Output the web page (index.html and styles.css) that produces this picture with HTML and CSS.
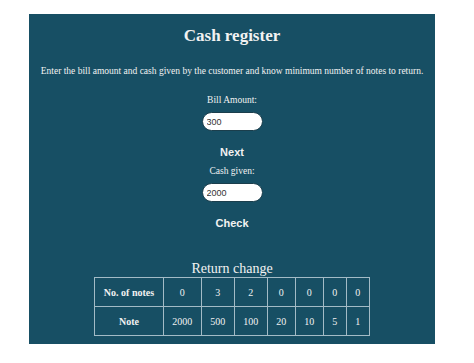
FILE: index.html
```html
<!doctype html>
<html>
  <head>
    <meta charset="utf-8">
    <title>Cash register</title>
    <link rel="stylesheet" href="styles.css">
  </head>
  <body>
    <div class="container">
      <h1 class="title">Cash register</h1>
      <p class="intro">Enter the bill amount and cash given by the customer and know minimum number of notes to return.</p>

      <label class="field-label" for="bill-amount">Bill Amount:</label>
      <input class="amount" id="bill-amount" type="number" value="300">
      <button class="btn">Next</button>

      <label class="field-label" for="cash-given">Cash given:</label>
      <input class="amount" id="cash-given" type="number" value="2000">
      <button class="btn">Check</button>

      <table class="change-table">
        <caption>Return change</caption>
        <tr>
          <th>No. of notes</th>
          <td>0</td><td>3</td><td>2</td><td>0</td><td>0</td><td>0</td><td>0</td>
        </tr>
        <tr>
          <th>Note</th>
          <td>2000</td><td>500</td><td>100</td><td>20</td><td>10</td><td>5</td><td>1</td>
        </tr>
      </table>
    </div>
  </body>
</html>
```

FILE: styles.css
```css
body {
  margin: 0;
  padding: 14px 39px 21px 29px;
  background: #ffffff;
  font-family: "Liberation Serif", "Times New Roman", serif;
}

.container {
  background: #174f64;
  color: #f2f2f2;
  display: flex;
  flex-direction: column;
  align-items: center;
  padding: 11px 0 8px 0;
}

.title {
  font-size: 17px;
  font-weight: bold;
  margin: 0;
  line-height: 22px;
}

.intro {
  font-size: 9.5px;
  margin: 18px 0 0 0;
  line-height: 12px;
}

.field-label {
  display: block;
  font-size: 9.5px;
  line-height: 11px;
  margin-top: 18px;
}

.amount {
  display: block;
  width: 61px;
  height: 19px;
  margin-top: 6px;
  box-sizing: border-box;
  border: 1px solid #1b3e4c;
  border-radius: 10px;
  background: #ffffff;
  font-family: "Liberation Sans", Arial, sans-serif;
  font-size: 9px;
  line-height: 17px;
  padding: 0 4px;
  color: #333;
  -moz-appearance: textfield;
}

.amount::-webkit-inner-spin-button,
.amount::-webkit-outer-spin-button {
  -webkit-appearance: none;
  margin: 0;
}

.btn {
  display: block;
  background: none;
  border: none;
  color: #f2f2f2;
  font-family: "Liberation Sans", Arial, sans-serif;
  font-weight: bold;
  font-size: 11px;
  line-height: 13px;
  margin-top: 15px;
  padding: 0;
}

.btn + .field-label {
  margin-top: 7px;
}

.change-table {
  margin-top: 31px;
  border-collapse: collapse;
  font-size: 10px;
}

.change-table caption {
  font-size: 14px;
  line-height: 16px;
}

.change-table th,
.change-table td {
  border: 1px solid #a3bbc6;
  height: 28px;
  text-align: center;
  padding: 0 8.5px;
}
```
